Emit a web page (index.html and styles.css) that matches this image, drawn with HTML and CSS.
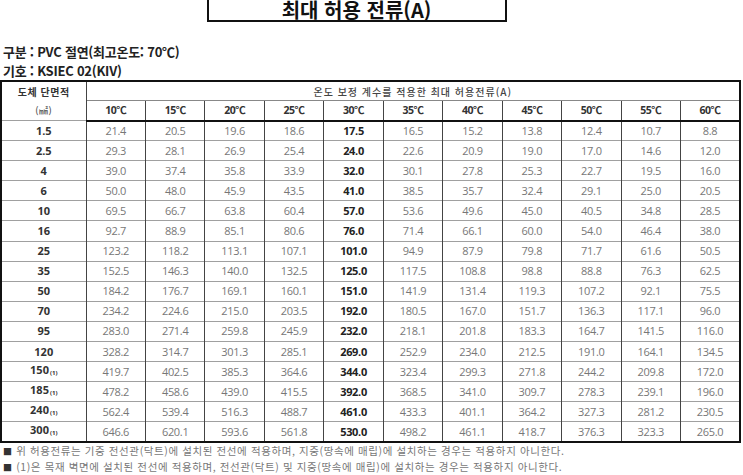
FILE: index.html
```html
<!DOCTYPE html>
<html lang="ko">
<head>
<meta charset="utf-8">
<title>최대 허용 전류(A)</title>
<link rel="stylesheet" href="styles.css">
</head>
<body>
<div class="page">
  <div class="title-wrap"><h1 class="title">최대 허용 전류(A)</h1></div>
  <div class="info">
    <div class="info-line">구분 : PVC 절연(최고온도: 70℃)</div>
    <div class="info-line">기호 : KSIEC 02(KIV)</div>
  </div>
  <table class="amp">
    <colgroup>
      <col class="c-size">
      <col><col><col><col><col><col><col><col><col><col><col>
    </colgroup>
    <thead>
      <tr class="h1">
        <th rowspan="2" class="size-head">도체 단면적<br><span class="unit">(㎟)</span></th>
        <th colspan="11" class="span-head">온도 보정 계수를 적용한 최대 허용전류(A)</th>
      </tr>
      <tr class="h2">
        <th>10℃</th><th>15℃</th><th>20℃</th><th>25℃</th><th>30℃</th><th>35℃</th><th>40℃</th><th>45℃</th><th>50℃</th><th>55℃</th><th>60℃</th>
      </tr>
    </thead>
    <tbody>
      <tr><th>1.5</th><td>21.4</td><td>20.5</td><td>19.6</td><td>18.6</td><td class="b">17.5</td><td>16.5</td><td>15.2</td><td>13.8</td><td>12.4</td><td>10.7</td><td>8.8</td></tr>
      <tr><th>2.5</th><td>29.3</td><td>28.1</td><td>26.9</td><td>25.4</td><td class="b">24.0</td><td>22.6</td><td>20.9</td><td>19.0</td><td>17.0</td><td>14.6</td><td>12.0</td></tr>
      <tr><th>4</th><td>39.0</td><td>37.4</td><td>35.8</td><td>33.9</td><td class="b">32.0</td><td>30.1</td><td>27.8</td><td>25.3</td><td>22.7</td><td>19.5</td><td>16.0</td></tr>
      <tr><th>6</th><td>50.0</td><td>48.0</td><td>45.9</td><td>43.5</td><td class="b">41.0</td><td>38.5</td><td>35.7</td><td>32.4</td><td>29.1</td><td>25.0</td><td>20.5</td></tr>
      <tr><th>10</th><td>69.5</td><td>66.7</td><td>63.8</td><td>60.4</td><td class="b">57.0</td><td>53.6</td><td>49.6</td><td>45.0</td><td>40.5</td><td>34.8</td><td>28.5</td></tr>
      <tr><th>16</th><td>92.7</td><td>88.9</td><td>85.1</td><td>80.6</td><td class="b">76.0</td><td>71.4</td><td>66.1</td><td>60.0</td><td>54.0</td><td>46.4</td><td>38.0</td></tr>
      <tr><th>25</th><td>123.2</td><td>118.2</td><td>113.1</td><td>107.1</td><td class="b">101.0</td><td>94.9</td><td>87.9</td><td>79.8</td><td>71.7</td><td>61.6</td><td>50.5</td></tr>
      <tr><th>35</th><td>152.5</td><td>146.3</td><td>140.0</td><td>132.5</td><td class="b">125.0</td><td>117.5</td><td>108.8</td><td>98.8</td><td>88.8</td><td>76.3</td><td>62.5</td></tr>
      <tr><th>50</th><td>184.2</td><td>176.7</td><td>169.1</td><td>160.1</td><td class="b">151.0</td><td>141.9</td><td>131.4</td><td>119.3</td><td>107.2</td><td>92.1</td><td>75.5</td></tr>
      <tr><th>70</th><td>234.2</td><td>224.6</td><td>215.0</td><td>203.5</td><td class="b">192.0</td><td>180.5</td><td>167.0</td><td>151.7</td><td>136.3</td><td>117.1</td><td>96.0</td></tr>
      <tr><th>95</th><td>283.0</td><td>271.4</td><td>259.8</td><td>245.9</td><td class="b">232.0</td><td>218.1</td><td>201.8</td><td>183.3</td><td>164.7</td><td>141.5</td><td>116.0</td></tr>
      <tr><th>120</th><td>328.2</td><td>314.7</td><td>301.3</td><td>285.1</td><td class="b">269.0</td><td>252.9</td><td>234.0</td><td>212.5</td><td>191.0</td><td>164.1</td><td>134.5</td></tr>
      <tr><th>150<span class="sub">(1)</span></th><td>419.7</td><td>402.5</td><td>385.3</td><td>364.6</td><td class="b">344.0</td><td>323.4</td><td>299.3</td><td>271.8</td><td>244.2</td><td>209.8</td><td>172.0</td></tr>
      <tr><th>185<span class="sub">(1)</span></th><td>478.2</td><td>458.6</td><td>439.0</td><td>415.5</td><td class="b">392.0</td><td>368.5</td><td>341.0</td><td>309.7</td><td>278.3</td><td>239.1</td><td>196.0</td></tr>
      <tr><th>240<span class="sub">(1)</span></th><td>562.4</td><td>539.4</td><td>516.3</td><td>488.7</td><td class="b">461.0</td><td>433.3</td><td>401.1</td><td>364.2</td><td>327.3</td><td>281.2</td><td>230.5</td></tr>
      <tr><th>300<span class="sub">(1)</span></th><td>646.6</td><td>620.1</td><td>593.6</td><td>561.8</td><td class="b">530.0</td><td>498.2</td><td>461.1</td><td>418.7</td><td>376.3</td><td>323.3</td><td>265.0</td></tr>
    </tbody>
  </table>
  <div class="notes">
    <p class="note"><span class="mark">■</span> 위 허용전류는 기중 전선관(닥트)에 설치된 전선에 적용하며, 지중(땅속에 매립)에 설치하는 경우는 적용하지 아니한다.</p>
    <p class="note"><span class="mark">■</span> (1)은 목재 벽면에 설치된 전선에 적용하며, 전선관(닥트) 및 지중(땅속에 매립)에 설치하는 경우는 적용하지 아니한다.</p>
  </div>
</div>
</body>
</html>
```
FILE: styles.css
```css
html, body {
  margin: 0;
  padding: 0;
  background: #ffffff;
}
body {
  font-family: "Open Sans", "Noto Sans CJK KR", sans-serif;
  color: #222;
}
.page {
  width: 743px;
}
.title-wrap {
  display: flex;
  justify-content: center;
}
.title {
  margin: 0 0 0 -30px;
  width: 296px;
  height: 20px;
  border: 2px solid #111;
  border-top: none;
  font-family: "Noto Sans CJK KR", sans-serif;
  font-weight: 700;
  font-size: 20px;
  line-height: 20px;
  padding: 0;
  text-align: center;
  color: #111;
  letter-spacing: 0;
}
.info {
  margin-top: 20px;
  padding-left: 3px;
}
.info-line {
  font-family: "Noto Sans CJK KR", sans-serif;
  font-weight: 700;
  font-size: 13px;
  line-height: 19px;
  color: #222;
  letter-spacing: -0.25px;
}
.amp {
  width: 741px;
  table-layout: fixed;
  border-collapse: collapse;
  border: 2px solid #111;
}
.c-size {
  width: 85px;
}
.amp th, .amp td {
  padding: 0;
  text-align: center;
  border-left: 1px solid #444;
  border-right: 1px solid #444;
  white-space: nowrap;
}
.amp thead tr {
  height: 19px;
}
.amp thead th {
  font-family: "Noto Sans CJK KR", sans-serif;
  font-weight: 700;
  font-size: 10px;
  color: #333;
  line-height: 13px;
}
.amp .h1 .span-head {
  border-bottom: 1px solid #888;
  font-weight: 500;
  color: #444;
  letter-spacing: 1px;
}
.amp .size-head {
  letter-spacing: 0.5px;
  line-height: 18px;
  padding-top: 1px;
}
.amp .unit {
  font-weight: 500;
  font-size: 9px;
  color: #555;
}
.amp .h2 th {
  border-bottom: 2px solid #111;
  font-family: "Open Sans", "Noto Sans CJK KR", sans-serif;
  font-weight: 700;
  font-size: 10.5px;
  letter-spacing: -0.5px;
}
.amp tbody tr {
  height: 20.1px;
}
.amp tbody td, .amp tbody th {
  border-top: 1px solid #a0a0a0;
  font-size: 11px;
  line-height: 14px;
}
.amp tbody td {
  color: #777;
  font-weight: 400;
  letter-spacing: -0.3px;
}
.amp tbody th {
  font-weight: 700;
  color: #333;
}
.amp tbody td.b {
  font-weight: 700;
  color: #222;
}
.sub {
  font-size: 6px;
  font-weight: 700;
  vertical-align: -1px;
  margin-left: 1px;
}
.notes {
  padding-left: 3px;
  margin-top: 1px;
}
.note {
  margin: 0;
  font-family: "Noto Sans CJK KR", sans-serif;
  font-size: 10.5px;
  line-height: 14.5px;
  color: #777;
  letter-spacing: 0.6px;
}
.mark {
  color: #333;
  font-size: 9px;
}
```
